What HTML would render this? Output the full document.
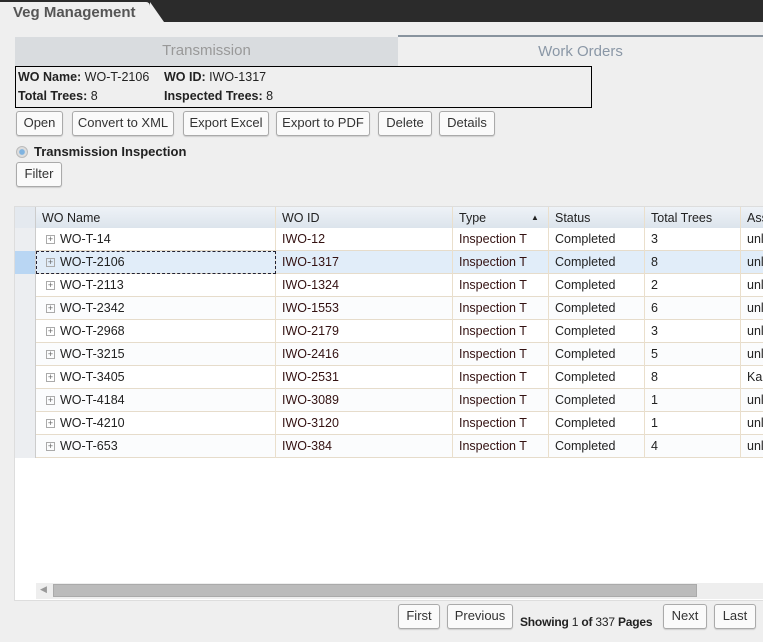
<!DOCTYPE html>
<html><head><style>
*{box-sizing:border-box}
body{margin:0;width:763px;height:642px;overflow:hidden;background:#efefef;font-family:"Liberation Sans",sans-serif;position:relative;font-size:13px;color:#222}
.top{position:absolute;left:0;top:0;width:763px;height:22px;background:#2b2b2b}
.vt{position:absolute;left:0;top:2px;width:150px;height:20px;background:#efefef;border-radius:0 4px 0 0;font-weight:bold;font-size:15px;color:#555;padding:2px 0 0 13px}
.vt:after{content:"";position:absolute;right:-14px;top:0;border-left:14px solid #efefef;border-top:20px solid transparent}
.t1{position:absolute;left:15px;top:37px;width:383px;height:29px;background:#d9dcdf;color:#999;font-size:15px;text-align:center;line-height:27px}
.t2{position:absolute;left:398px;top:35px;width:365px;height:2px;background:#88939e}
.t2t{position:absolute;left:398px;top:43px;width:365px;text-align:center;color:#8a97a6;font-size:15px}
.info{position:absolute;left:15px;top:66px;width:577px;height:42px;border:1px solid #000;font-size:12.5px;line-height:19px;padding:1px 0 0 2px}
.info span{position:absolute}
.btn{position:absolute;height:25px;border:1px solid #aaa;border-radius:3px;background:#fafafa;font-size:13px;text-align:center;line-height:22px;color:#333;box-shadow:0 1px 1px #ccc}
.grid{position:absolute;left:14px;top:206px;width:760px;height:395px;background:#fff;border:1px solid #ddd}
.hdr{position:absolute;left:0;top:0;height:22px;width:760px;background:linear-gradient(#eef2f7,#dce4ec);border-bottom:1px solid #ccd}
.cell{position:absolute;height:23px;line-height:22px;font-size:12.5px;padding-left:6px;white-space:nowrap;overflow:hidden;border-right:1px solid #eadfcc}
.row{position:absolute;left:0;width:760px;height:23px;border-bottom:1px solid #e6dccb}
.ind{position:absolute;left:0;width:21px;height:23px;background:#eceef1;border-right:1px solid #ccc}
.plus{display:inline-block;width:9px;height:9px;border:1px solid #aaa;font-size:9px;line-height:7px;text-align:center;color:#666;margin:0 5px 0 4px;vertical-align:1px}
</style></head><body>
<div class="top"></div><div class="vt">Veg Management</div>
<div class="t1">Transmission</div><div class="t2"></div><div class="t2t">Work Orders</div>
<div class="info">
<span style="left:2px;top:1px"><b>WO Name:</b> WO-T-2106</span>
<span style="left:148px;top:1px"><b>WO ID:</b> IWO-1317</span>
<span style="left:2px;top:20px"><b>Total Trees:</b> 8</span>
<span style="left:148px;top:20px"><b>Inspected Trees:</b> 8</span>
</div>
<div class="btn" style="left:16px;top:111px;width:47px">Open</div>
<div class="btn" style="left:72px;top:111px;width:102px">Convert to XML</div>
<div class="btn" style="left:183px;top:111px;width:86px">Export Excel</div>
<div class="btn" style="left:276px;top:111px;width:94px">Export to PDF</div>
<div class="btn" style="left:378px;top:111px;width:54px">Delete</div>
<div class="btn" style="left:439px;top:111px;width:56px">Details</div>
<div style="position:absolute;left:16px;top:146px;width:12px;height:12px;border-radius:50%;background:radial-gradient(#7fb3e0 35%,#ddd 45%);border:1px solid #bbb"></div>
<div style="position:absolute;left:34px;top:144px;font-weight:bold;font-size:13px">Transmission Inspection</div>
<div class="btn" style="left:16px;top:162px;width:46px">Filter</div>
<div class="grid">
<div class="hdr">
<div class="ind" style="height:22px;background:#e4e9ef"></div>
<div class="cell" style="left:21px;width:240px">WO Name</div>
<div class="cell" style="left:261px;width:177px">WO ID</div>
<div class="cell" style="left:438px;width:96px">Type <span style="position:absolute;left:78px;font-size:8px">▲</span></div>
<div class="cell" style="left:534px;width:96px">Status</div>
<div class="cell" style="left:630px;width:96px">Total Trees</div>
<div class="cell" style="left:726px;width:40px">Ass</div>
</div>
<div id="rows"></div>
<div style="position:absolute;left:21px;top:376px;width:740px;height:16px;background:#eee"><span style="position:absolute;left:4px;top:1px;font-size:9px;color:#999">◀</span><div style="position:absolute;left:17px;top:1px;width:644px;height:13px;background:#bbb;border:1px solid #aaa"></div></div>
</div>
<div class="btn" style="left:398px;top:604px;width:42px">First</div>
<div class="btn" style="left:447px;top:604px;width:66px">Previous</div>
<div style="position:absolute;left:520px;top:615px;font-size:12px;letter-spacing:-0.2px"><b>Showing</b> 1 <b>of</b> 337 <b>Pages</b></div>
<div class="btn" style="left:663px;top:604px;width:44px">Next</div>
<div class="btn" style="left:714px;top:604px;width:42px">Last</div>
<script>
var d=[["WO-T-14","IWO-12","3","unl"],["WO-T-2106","IWO-1317","8","unl"],["WO-T-2113","IWO-1324","2","unl"],["WO-T-2342","IWO-1553","6","unl"],["WO-T-2968","IWO-2179","3","unl"],["WO-T-3215","IWO-2416","5","unl"],["WO-T-3405","IWO-2531","8","Ka"],["WO-T-4184","IWO-3089","1","unl"],["WO-T-4210","IWO-3120","1","unl"],["WO-T-653","IWO-384","4","unl"]];
var h="";d.forEach(function(r,i){var t=21+i*23,s=i==1;
h+='<div class="row" style="top:'+t+'px;background:'+(s?'#e1edf9':(i%2?'#fbfcfd':'#fff'))+'"><div class="ind" style="'+(s?'background:#b9d6f3':'')+'"></div>'+
'<div class="cell" style="left:21px;width:240px;'+(s?'outline:1px dashed #223;outline-offset:-1px':'')+'"><span class="plus">+</span>'+r[0]+'</div>'+
'<div class="cell" style="left:261px;width:177px;color:#311">'+r[1]+'</div><div class="cell" style="left:438px;width:96px;color:#311">Inspection T</div><div class="cell" style="left:534px;width:96px">Completed</div><div class="cell" style="left:630px;width:96px">'+r[2]+'</div><div class="cell" style="left:726px;width:40px">'+r[3]+'</div></div>';});
document.getElementById("rows").innerHTML=h;
</script>
</body></html>
